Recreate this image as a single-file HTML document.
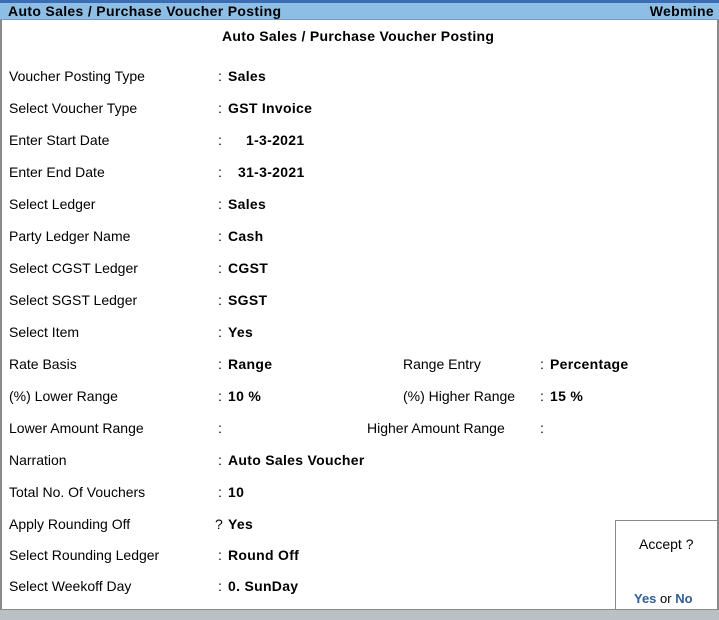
<!DOCTYPE html>
<html><head><style>
body{margin:0;width:719px;height:619px;position:relative;background:#fff;font-family:"Liberation Sans",Arial,sans-serif;font-size:14px;color:#000;overflow:hidden}
.top{position:absolute;left:0;top:0;width:719px;height:3px;background:#3a6db5}
.bar{position:absolute;left:0;top:3px;width:719px;height:16px;background:#8dbfe6;border-bottom:1px solid #6f9cc4;font-weight:bold;font-size:14px;line-height:16px;letter-spacing:0.33px}
.bar .l{position:absolute;left:8px}.bar .r{position:absolute;right:5px}
.lb{position:absolute;left:0;top:20px;width:2px;height:590px;background:#8a8a8a}
.rb{position:absolute;right:0;top:20px;width:2px;height:590px;background:#8a8a8a}
.bot{position:absolute;left:0;top:609px;width:719px;height:10px;background:#bcc0c4;border-top:1px solid #8a8a8a}
.t{position:absolute;white-space:nowrap;line-height:16px}
.b{font-weight:bold;letter-spacing:0.3px}
.acc{position:absolute;left:615px;top:520px;width:101px;height:88px;border:1px solid #8a8a8a;background:#fff}
</style></head><body>
<div class="top"></div>
<div class="bar"><span class="l">Auto Sales / Purchase Voucher Posting</span><span class="r">Webmine</span></div>
<div class="lb"></div><div class="rb"></div>
<div class="t b" style="left:222px;top:28px">Auto Sales / Purchase Voucher Posting</div>

<div class="t" style="left:9px;top:68px">Voucher Posting Type</div><div class="t" style="left:218px;top:68px">:</div><div class="t b" style="left:228px;top:68px">Sales</div>
<div class="t" style="left:9px;top:100px">Select Voucher Type</div><div class="t" style="left:218px;top:100px">:</div><div class="t b" style="left:228px;top:100px">GST Invoice</div>
<div class="t" style="left:9px;top:132px">Enter Start Date</div><div class="t" style="left:218px;top:132px">:</div><div class="t b" style="left:246px;top:132px">1-3-2021</div>
<div class="t" style="left:9px;top:164px">Enter End Date</div><div class="t" style="left:218px;top:164px">:</div><div class="t b" style="left:238px;top:164px">31-3-2021</div>
<div class="t" style="left:9px;top:196px">Select Ledger</div><div class="t" style="left:218px;top:196px">:</div><div class="t b" style="left:228px;top:196px">Sales</div>
<div class="t" style="left:9px;top:228px">Party Ledger Name</div><div class="t" style="left:218px;top:228px">:</div><div class="t b" style="left:228px;top:228px">Cash</div>
<div class="t" style="left:9px;top:260px">Select CGST Ledger</div><div class="t" style="left:218px;top:260px">:</div><div class="t b" style="left:228px;top:260px">CGST</div>
<div class="t" style="left:9px;top:292px">Select SGST Ledger</div><div class="t" style="left:218px;top:292px">:</div><div class="t b" style="left:228px;top:292px">SGST</div>
<div class="t" style="left:9px;top:324px">Select Item</div><div class="t" style="left:218px;top:324px">:</div><div class="t b" style="left:228px;top:324px">Yes</div>
<div class="t" style="left:9px;top:356px">Rate Basis</div><div class="t" style="left:218px;top:356px">:</div><div class="t b" style="left:228px;top:356px">Range</div>
<div class="t" style="left:403px;top:356px">Range Entry</div><div class="t" style="left:540px;top:356px">:</div><div class="t b" style="left:550px;top:356px">Percentage</div>
<div class="t" style="left:9px;top:388px">(%) Lower Range</div><div class="t" style="left:218px;top:388px">:</div><div class="t b" style="left:228px;top:388px">10 %</div>
<div class="t" style="left:403px;top:388px">(%) Higher Range</div><div class="t" style="left:540px;top:388px">:</div><div class="t b" style="left:550px;top:388px">15 %</div>
<div class="t" style="left:9px;top:420px">Lower Amount Range</div><div class="t" style="left:218px;top:420px">:</div>
<div class="t" style="left:367px;top:420px">Higher Amount Range</div><div class="t" style="left:540px;top:420px">:</div>
<div class="t" style="left:9px;top:452px">Narration</div><div class="t" style="left:218px;top:452px">:</div><div class="t b" style="left:228px;top:452px">Auto Sales Voucher</div>
<div class="t" style="left:9px;top:484px">Total No. Of Vouchers</div><div class="t" style="left:218px;top:484px">:</div><div class="t b" style="left:228px;top:484px">10</div>
<div class="t" style="left:9px;top:516px">Apply Rounding Off</div><div class="t" style="left:215px;top:516px">?</div><div class="t b" style="left:228px;top:516px">Yes</div>
<div class="t" style="left:9px;top:547px">Select Rounding Ledger</div><div class="t" style="left:218px;top:547px">:</div><div class="t b" style="left:228px;top:547px">Round Off</div>
<div class="t" style="left:9px;top:578px">Select Weekoff Day</div><div class="t" style="left:218px;top:578px">:</div><div class="t b" style="left:228px;top:578px">0. SunDay</div>

<div class="acc">
<div class="t" style="left:23px;top:15px">Accept ?</div>
<div class="t" style="left:18px;top:70px;font-size:13px"><b style="color:#2f5f96">Yes</b> or <b style="color:#2f5f96">No</b></div>
</div>
<div class="bot"></div>
</body></html>
